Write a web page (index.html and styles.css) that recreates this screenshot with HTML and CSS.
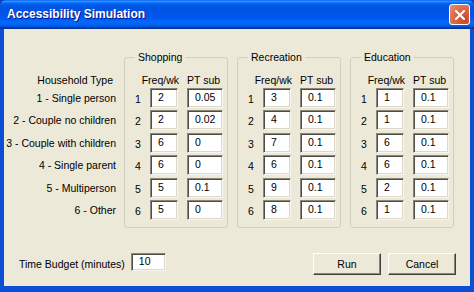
FILE: index.html
```html
<!DOCTYPE html>
<html lang="en">

<head>
    <meta charset="UTF-8">
    <title>Accessibility Simulation</title>
    <link rel="stylesheet" href="styles.css">
</head>

<body>
    <div class="window">
        <div class="titlebar">
            <span class="title">Accessibility Simulation</span>
            <span class="close">
                <svg width="10" height="10" viewBox="0 0 10 10">
                    <path d="M1 1 L9 9 M9 1 L1 9" stroke="#fff" stroke-width="2" stroke-linecap="square" />
                </svg>
            </span>
        </div>

        <div class="client">
            <div class="groups">
                <div class="labels">
                    <div class="head">Household Type</div>
                    <div class="lbl">1 - Single person</div>
                    <div class="lbl">2 - Couple no children</div>
                    <div class="lbl">3 - Couple with children</div>
                    <div class="lbl">4 - Single parent</div>
                    <div class="lbl">5 - Multiperson</div>
                    <div class="lbl">6 - Other</div>
                </div>

                <fieldset class="grp">
                    <legend>Shopping</legend>
                    <div class="grid">
                        <div class="hd freq">Freq/wk</div>
                        <div class="hd pt">PT sub</div>
                        <span class="idx">1</span><input class="box f" value="2"><input class="box p" value="0.05">
                        <span class="idx">2</span><input class="box f" value="2"><input class="box p" value="0.02">
                        <span class="idx">3</span><input class="box f" value="6"><input class="box p" value="0">
                        <span class="idx">4</span><input class="box f" value="6"><input class="box p" value="0">
                        <span class="idx">5</span><input class="box f" value="5"><input class="box p" value="0.1">
                        <span class="idx">6</span><input class="box f" value="5"><input class="box p" value="0">
                    </div>
                </fieldset>

                <fieldset class="grp">
                    <legend>Recreation</legend>
                    <div class="grid">
                        <div class="hd freq">Freq/wk</div>
                        <div class="hd pt">PT sub</div>
                        <span class="idx">1</span><input class="box f" value="3"><input class="box p" value="0.1">
                        <span class="idx">2</span><input class="box f" value="4"><input class="box p" value="0.1">
                        <span class="idx">3</span><input class="box f" value="7"><input class="box p" value="0.1">
                        <span class="idx">4</span><input class="box f" value="6"><input class="box p" value="0.1">
                        <span class="idx">5</span><input class="box f" value="9"><input class="box p" value="0.1">
                        <span class="idx">6</span><input class="box f" value="8"><input class="box p" value="0.1">
                    </div>
                </fieldset>

                <fieldset class="grp">
                    <legend>Education</legend>
                    <div class="grid">
                        <div class="hd freq">Freq/wk</div>
                        <div class="hd pt">PT sub</div>
                        <span class="idx">1</span><input class="box f" value="1"><input class="box p" value="0.1">
                        <span class="idx">2</span><input class="box f" value="1"><input class="box p" value="0.1">
                        <span class="idx">3</span><input class="box f" value="6"><input class="box p" value="0.1">
                        <span class="idx">4</span><input class="box f" value="6"><input class="box p" value="0.1">
                        <span class="idx">5</span><input class="box f" value="2"><input class="box p" value="0.1">
                        <span class="idx">6</span><input class="box f" value="1"><input class="box p" value="0.1">
                    </div>
                </fieldset>
            </div>

            <div class="footer">
                <label class="budget" for="budget">Time Budget (minutes)</label>
                <input class="box budget-box" id="budget" value="10">
                <div class="buttons">
                    <button class="btn">Run</button>
                    <button class="btn">Cancel</button>
                </div>
            </div>
        </div>
    </div>
</body>

</html>
```

FILE: styles.css
```css
body {
    margin: 0;
    background-color: #0a3fb8;
    font-family: "Liberation Sans", Arial, sans-serif;
    font-size: 10.5px;
    color: #000;
}

.window {
    width: 474px;
    height: 292px;
    display: flex;
    flex-direction: column;
    background-color: #0b4fd6;
    border-radius: 6px 6px 0 0;
    overflow: hidden;
}

.titlebar {
    height: 29px;
    flex: none;
    display: flex;
    align-items: center;
    justify-content: space-between;
    padding: 0 4px 0 7px;
    background: linear-gradient(to bottom, #0058ee 0%, #3593ff 4%, #288eff 6%, #127dff 8%, #036ffc 10%, #0262ee 14%, #0057e5 20%, #0054e3 24%, #0055eb 56%, #005bf5 66%, #026afe 76%, #0062ef 86%, #0052d6 92%, #0040ab 94%, #003092 100%);
}

.title {
    color: #fff;
    font-weight: bold;
    font-size: 12px;
    text-shadow: 1px 1px 0 #0f1089;
    margin-top: -1px;
}

.close {
    width: 19px;
    height: 19px;
    display: flex;
    align-items: center;
    justify-content: center;
    border: 1px solid #fff;
    border-radius: 3px;
    background: radial-gradient(circle at 80% 80%, #cc4623 0%, #dc6a47 55%, #e7907a 100%);
}

.client {
    flex: 1;
    margin: 0 4px 6px 4px;
    background-color: #ece9d8;
    display: flex;
    flex-direction: column;
}

.groups {
    display: flex;
    gap: 9px;
    padding-top: 22px;
}

.labels {
    flex: none;
    width: 112px;
    margin-right: -1px;
    padding-top: 23px;
    display: flex;
    flex-direction: column;
    gap: 2.4px;
    text-align: right;
    white-space: nowrap;
}

.labels .head {
    height: 12px;
    line-height: 12px;
    margin-right: 3px;
    margin-bottom: -0.4px;
}

.labels .lbl {
    height: 20px;
    line-height: 20px;
}

.grp {
    flex: none;
    width: 104px;
    min-width: 0;
    box-sizing: border-box;
    margin: 0;
    padding: 11px 4px 7px 8px;
    border: 1px solid #d0d0bf;
    border-radius: 3px;
}

.grp legend {
    padding: 0 3px;
    margin-left: 2px;
    line-height: 12px;
}

.grid {
    display: grid;
    grid-template-columns: 8px 28px 36px;
    column-gap: 9px;
    row-gap: 2.4px;
}

.grid .hd {
    height: 12px;
    line-height: 12px;
    margin-bottom: -0.4px;
    white-space: nowrap;
}

.grid .freq {
    grid-column: 1 / 3;
    text-align: right;
    margin-right: -1px;
}

.grid .pt {
    grid-column: 3;
}

.idx {
    padding: 4px 0 0 2px;
    line-height: 14px;
    white-space: nowrap;
}

.box {
    box-sizing: border-box;
    height: 20px;
    margin: 0;
    padding: 0 0 2px 7px;
    font-family: inherit;
    font-size: 10.5px;
    color: #000;
    background-color: #fff;
    border: 1px solid;
    border-color: #8a877a #f6f5ef #f6f5ef #8a877a;
    box-shadow: inset 1px 1px 0 #4e4c44, inset -1px -1px 0 #dcd9cb;
    outline: none;
}

.box.f {
    width: 28px;
}

.box.p {
    width: 36px;
}

.footer {
    display: flex;
    align-items: flex-start;
    margin-top: 25px;
    padding-left: 15px;
}

.budget {
    line-height: 20px;
    margin-top: 1px;
}

.budget-box {
    width: 35px;
    height: 18px;
    margin-left: 6px;
}

.buttons {
    display: flex;
    gap: 7px;
    margin-left: auto;
    margin-right: 14px;
}

.btn {
    width: 68px;
    height: 22px;
    padding: 0;
    font-family: inherit;
    font-size: 10.5px;
    color: #000;
    background-color: #ece9d8;
    border: 1px solid;
    border-color: #fff #404040 #404040 #fff;
    box-shadow: inset -1px -1px 0 #8a877a;
}
```
